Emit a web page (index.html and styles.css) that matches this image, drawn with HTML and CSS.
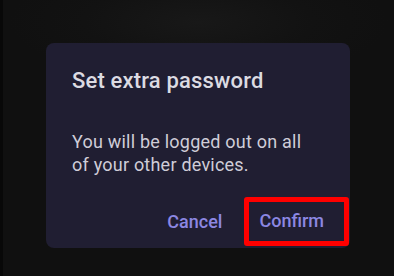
FILE: index.html
```html
<!DOCTYPE html>
<html>
<head>
<meta charset="utf-8">
<link rel="stylesheet" href="styles.css">
</head>
<body>
<div class="screen">
  <div class="dialog">
    <h2 class="title">Set extra password</h2>
    <p class="message">You will be logged out on all of your other devices.</p>
    <div class="actions">
      <button class="btn cancel">Cancel</button>
      <button class="btn confirm">Confirm</button>
    </div>
  </div>
</div>
</body>
</html>
```
FILE: styles.css
```css
html, body {
  margin: 0;
  padding: 0;
}
body {
  width: 394px;
  height: 276px;
  overflow: hidden;
  background: #101010;
  font-family: Roboto, "Noto Sans", sans-serif;
}
.screen {
  width: 394px;
  height: 276px;
  box-sizing: border-box;
  padding-top: 43px;
  border-left: 3px solid #080808;
  padding-left: 43px;
  background: radial-gradient(ellipse 190px 60px at 50% 22px, #181818 0%, #121212 60%, #101010 100%);
}
.dialog {
  width: 304px;
  height: 205px;
  box-sizing: border-box;
  background: #201e32;
  border-radius: 8px;
  padding: 24px 1px 2px 26px;
  display: flex;
  flex-direction: column;
}
.title {
  margin: 0;
  font-size: 22px;
  line-height: 28px;
  font-weight: 500;
  letter-spacing: 0.17px;
  color: #dcdbe2;
}
.message {
  margin: 35px 0 0 0;
  width: 250px;
  font-size: 18px;
  line-height: 23px;
  letter-spacing: 0.22px;
  color: #cfcdd8;
}
.actions {
  margin-top: auto;
  display: flex;
  justify-content: flex-end;
  align-items: center;
}
.btn {
  font-family: Roboto, "Noto Sans", sans-serif;
  font-size: 18px;
  line-height: 21px;
  font-weight: 500;
  color: #8c87e2;
  background: transparent;
  border: none;
  padding: 0;
  cursor: pointer;
}
.cancel {
  margin-right: 22px;
}
.confirm {
  border: 5px solid #ff0000;
  border-radius: 3px;
  padding: 8px 20px 10px 10px;
}
```
